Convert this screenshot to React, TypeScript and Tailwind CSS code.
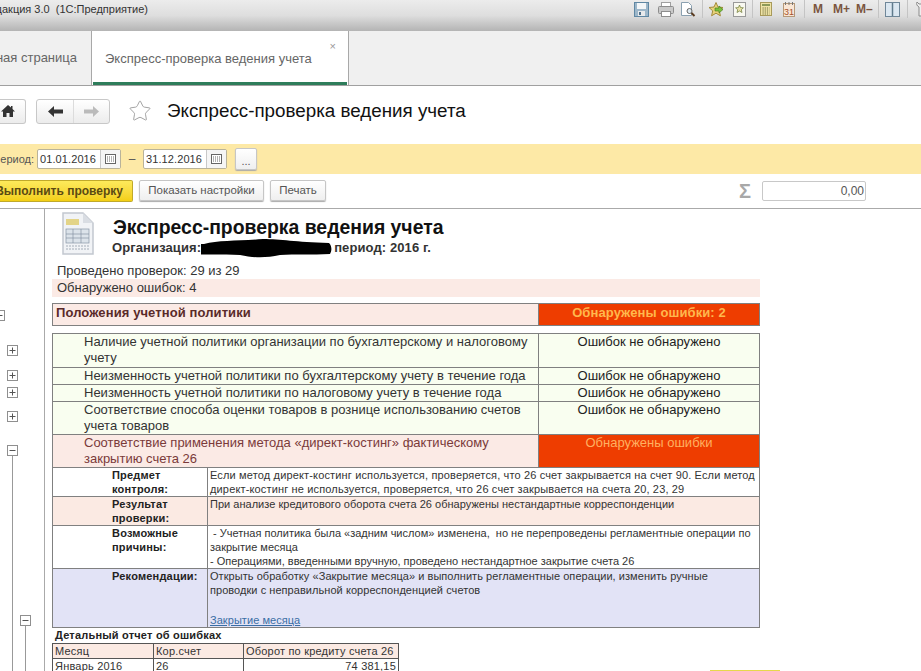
import { Star } from "lucide-react";

const FONT = "font-['Liberation_Sans',Arial,sans-serif]";

function TreeBox({ kind, className }: { kind: "plus" | "minus"; className: string }) {
  return (
    <svg className={`shrink-0 ${className}`} width="11" height="11" viewBox="0 0 11 11">
      <rect x="0.5" y="0.5" width="10" height="10" fill="#fff" stroke="#8f8f8f" />
      <path d={kind === "plus" ? "M2.5 5.5h6M5.5 2.5v6" : "M2.5 5.5h6"} stroke="#555" />
    </svg>
  );
}

function Divider({ className }: { className: string }) {
  return <div className={`h-[18px] w-px shrink-0 bg-[#c4c4c4] ${className}`} />;
}

function ToolIcons() {
  return (
    <div className="ml-[486px] flex h-[18px] shrink-0 items-center">
      {/* save */}
      <svg className="shrink-0" width="15" height="15" viewBox="0 0 15 15">
        <rect x="0.5" y="0.5" width="14" height="14" fill="#9db7ca" stroke="#5f87a3" />
        <rect x="3" y="1" width="9" height="6" fill="#f3f6f8" />
        <rect x="4" y="9" width="7" height="5" fill="#e8eaec" />
        <rect x="5" y="10" width="2" height="3" fill="#4d6f8a" />
      </svg>
      {/* print */}
      <svg className="ml-[9px] shrink-0" width="16" height="15" viewBox="0 0 16 15">
        <rect x="3.5" y="0.5" width="9" height="5" fill="#fff" stroke="#a0a0a0" />
        <rect x="0.5" y="4.5" width="15" height="7" rx="1" fill="#c9c9c9" stroke="#8d8d8d" />
        <rect x="3.5" y="9.5" width="9" height="5" fill="#fff" stroke="#8d8d8d" />
      </svg>
      {/* preview */}
      <svg className="ml-[6px] shrink-0" width="16" height="15" viewBox="0 0 16 15">
        <path d="M1.5.5h7l3 3v10h-10z" fill="#fff" stroke="#8aa0b0" />
        <circle cx="9.5" cy="9" r="2.5" fill="#dfeaf1" stroke="#666" />
        <path d="M11.5 11l3 3" stroke="#5a3b20" strokeWidth="2" />
      </svg>
      <Divider className="mx-[6px]" />
      {/* favourites with arrow */}
      <svg className="shrink-0" width="16" height="15" viewBox="0 0 16 15">
        <path d="M7 .5l2 4.5 5 .5-3.7 3.3 1.1 5L7 11.2l-4.4 2.6 1.1-5L0 5.5 5 5z" fill="#e7d27a" stroke="#a38b3a" />
        <path d="M6 6h4V4l4 3.5-4 3.5V9H6z" fill="#7cc03c" stroke="#3f7a18" strokeWidth="0.6" />
      </svg>
      {/* document with star */}
      <svg className="ml-[8px] shrink-0" width="13" height="15" viewBox="0 0 13 15">
        <rect x="0.5" y="0.5" width="12" height="14" fill="#f8f8f0" stroke="#999" />
        <path d="M6.5 3l1.1 2.6 2.8.2-2.1 1.9.7 2.8-2.5-1.5L4 10.5l.7-2.8-2.1-1.9 2.8-.2z" fill="#e9e2a8" stroke="#6b7a3a" strokeWidth="0.7" />
      </svg>
      <Divider className="mx-[6px]" />
      {/* calculator */}
      <svg className="ml-[1px] shrink-0" width="12" height="14" viewBox="0 0 12 14">
        <rect x="0.5" y="0.5" width="11" height="13" fill="#efe3a6" stroke="#a89a5a" />
        <rect x="2" y="2" width="8" height="2" fill="#8d9a5a" />
        <path d="M2.5 6h7M2.5 8h7M2.5 10h7M2.5 12h7" stroke="#6b6b3a" strokeDasharray="1.2 1" />
      </svg>
      {/* calendar */}
      <svg className="ml-[11px] shrink-0" width="12" height="15" viewBox="0 0 12 15">
        <rect x="0.5" y="1.5" width="11" height="13" fill="#f9e6d5" stroke="#b59878" />
        <path d="M2.5 0v3M6 0v3M9.5 0v3" stroke="#777" />
        <text x="6" y="12.5" textAnchor="middle" fontSize="9" fill="#a4502c" fontFamily="Liberation Sans">31</text>
      </svg>
      <Divider className="mr-[8px] ml-[9px]" />
      <div className="flex shrink-0 items-center text-[12px] leading-none font-bold whitespace-nowrap text-[#7b5540]">
        <span className="w-[10px]">M</span>
        <span className="ml-[10px] w-[16px]">M+</span>
        <span className="ml-[7px] w-[16px]">M–</span>
      </div>
      <Divider className="mr-[6px] ml-[6px]" />
      <svg className="shrink-0" width="15" height="15" viewBox="0 0 15 15">
        <rect x="0.5" y="0.5" width="14" height="14" fill="#dbe7f1" stroke="#6f8799" />
        <path d="M7.5 1v13" stroke="#5f7a8c" strokeWidth="1.5" />
      </svg>
      <Divider className="mr-[7px] ml-[7px]" />
      <svg className="shrink-0" width="12" height="17" viewBox="0 0 12 17">
        <path d="M2 1c-1 2 0 4 2 5v9h3V6c2-1 3-3 2-5L7 3H4z" fill="#eee" stroke="#8b8b8b" />
      </svg>
    </div>
  );
}

function DateField({ value }: { value: string }) {
  return (
    <div className="flex h-[20px] w-[84px] items-center rounded-[2px] border border-[#b9b39a] bg-white">
      <span className="w-[62px] pl-[2px] text-[11px] tracking-[0.1px] text-[#333]">{value}</span>
      <span className="flex h-full flex-1 items-center justify-center border-l border-[#c8c8c8] bg-[#f5f5f5]">
        <svg width="11" height="10" viewBox="0 0 11 10">
          <rect x="0.5" y="0.5" width="10" height="9" fill="#fff" stroke="#666" />
          <path d="M2 3h7M2 5h7M2 7h7" stroke="#666" strokeDasharray="1 1" />
        </svg>
      </span>
    </div>
  );
}

function FlatButton({ label, width }: { label: string; width: string }) {
  return (
    <div className={`flex h-[21px] items-center justify-center rounded-[2px] border border-[#c6c6c6] bg-gradient-to-b from-white to-[#efefef] text-[11.5px] text-[#555] shadow-[0_1px_1px_#aaa] ${width}`}>
      {label}
    </div>
  );
}

const CHECKS = [
  { lines: "Наличие учетной политики организации по бухгалтерскому и налоговому учету", height: "h-[34px]" },
  { lines: "Неизменность учетной политики по бухгалтерскому учету в течение года", height: "h-[16px]" },
  { lines: "Неизменность учетной политики по налоговому учету в течение года", height: "h-[17px]" },
  { lines: "Соответствие способа оценки товаров в рознице использованию счетов учета товаров", height: "h-[33px]" },
];

const DETAILS = [
  {
    label: ["Предмет", "контроля:"],
    bg: "bg-white",
    height: "h-[29px]",
    tracking: "tracking-[0.15px]",
    text: (
      <>
        Если метод директ-костинг используется, проверяется, что 26 счет закрывается на счет 90. Если метод
        <br />
        директ-костинг не используется, проверяется, что 26 счет закрывается на счета 20, 23, 29
      </>
    ),
  },
  {
    label: ["Результат", "проверки:"],
    bg: "bg-[#fbeae3]",
    height: "h-[29px]",
    tracking: "tracking-[0.02px]",
    text: <>При анализе кредитового оборота счета 26 обнаружены нестандартные корреспонденции</>,
  },
  {
    label: ["Возможные", "причины:"],
    bg: "bg-white",
    height: "h-[43px]",
    tracking: "tracking-normal",
    text: (
      <>
        &nbsp;- Учетная политика была «задним числом» изменена, &nbsp;но не перепроведены регламентные операции по
        <br />
        закрытие месяца
        <br />- Операциями, введенными вручную, проведено нестандартное закрытие счета 26
      </>
    ),
  },
];

const LABEL_CELL = "border border-[#808080] pl-[59px] align-top text-[11px] leading-[14px] font-bold tracking-[0.2px] text-[#222]";
const TEXT_CELL = "border border-[#808080] pl-[2px] align-top text-[11px] leading-[14px] whitespace-nowrap text-[#333]";

function TextSlice({ children, width }: { children: React.ReactNode; width: string }) {
  return <div className={`flex shrink-0 justify-end overflow-hidden whitespace-nowrap ${width}`}>{children}</div>;
}

export default function App() {
  return (
    <div className={`${FONT} flex h-[671px] w-[921px] flex-col overflow-hidden bg-white`}>
      {/* title bar */}
      <div className="flex h-[31px] shrink-0 bg-gradient-to-b from-[#ececec] via-[#dedede] to-[#b4b4b4]">
        <TextSlice width="w-[148px]">
          <span className="pt-[2px] text-[11px] leading-[14px] text-[#333]">Бухгалтерия предприятия, редакция 3.0 &nbsp;(1С:Предприятие)</span>
        </TextSlice>
        <ToolIcons />
      </div>

      {/* tabs */}
      <div className="flex h-[55px] shrink-0 border-b border-[#a0a0a0] bg-[#f0f0f0]">
        <div className="flex w-[91px] shrink-0 items-center justify-end overflow-hidden pr-[14px] pb-[1px] text-[13px] whitespace-nowrap text-[#666]">
          Начальная страница
        </div>
        <div className="relative flex w-[258px] shrink-0 flex-col border-x border-[#a8a8a8] bg-white">
          <div className="flex-1 pt-[19px] pl-[13px] text-[13px] leading-[18px] text-[#666]">Экспресс-проверка ведения учета</div>
          <span className="absolute top-[10px] right-[12px] text-[11px] leading-none text-[#999]">×</span>
          <div className="mx-[1px] h-[3px] bg-[#2e7d5b]" />
        </div>
      </div>

      {/* nav */}
      <div className="flex h-[58px] shrink-0 items-center pb-[8px]">
        <div className="flex h-[25px] w-[26px] items-center justify-end rounded-r-[3px] border border-l-0 border-[#c8c8c8] bg-gradient-to-b from-white to-[#ececec] pr-[10px]">
          <svg className="shrink-0" width="14" height="12" viewBox="0 0 14 12">
            <path d="M7 0L0 6.5h2V12h3.5V8h3v4H12V6.5h2L11.5 4V1H10v1.5z" fill="#333" />
          </svg>
        </div>
        <div className="ml-[10px] flex h-[25px] w-[74px] rounded-[3px] border border-[#c8c8c8] bg-gradient-to-b from-white to-[#ececec]">
          <span className="flex w-[37px] items-center justify-center border-r border-[#dcdcdc]">
            <svg width="15" height="11" viewBox="0 0 15 11"><path d="M0 5.5L6 0v3.5h9v4H6V11z" fill="#333" /></svg>
          </span>
          <span className="flex flex-1 items-center justify-center">
            <svg width="15" height="11" viewBox="0 0 15 11"><path d="M15 5.5L9 0v3.5H0v4h9V11z" fill="#bbb" /></svg>
          </span>
        </div>
        <Star className="ml-[18px] shrink-0" size={24} strokeWidth={0.9} color="#999" />
        <h1 className="ml-[15px] text-[18.8px] leading-none text-[#111]">Экспресс-проверка ведения учета</h1>
      </div>

      {/* period */}
      <div className="flex h-[30px] shrink-0 items-center bg-[#fde9a6]">
        <TextSlice width="w-[34px]">
          <span className="text-[11px] text-[#555]">Период:</span>
        </TextSlice>
        <div className="ml-[3px]"><DateField value="01.01.2016" /></div>
        <span className="w-[22px] text-center text-[12px] text-[#555]">–</span>
        <DateField value="31.12.2016" />
        <div className="ml-[8px] flex h-[22px] w-[22px] items-end justify-center rounded-[2px] border border-[#c6c6c6] bg-gradient-to-b from-white to-[#efefef] pb-[2px] text-[11px] leading-[12px] text-[#555] shadow-[0_1px_1px_#aaa]">...</div>
      </div>

      {/* actions */}
      <div className="flex h-[35px] shrink-0 items-center border-b border-[#aaa] pb-[1px]">
        <div className="flex h-[22px] w-[133px] items-center justify-end overflow-hidden rounded-r-[2px] border border-l-0 border-[#c0a92a] bg-gradient-to-b from-[#fdea5a] to-[#f3cf12] pr-[9px] text-[12px] font-bold whitespace-nowrap text-[#5b4a12]">
          Выполнить проверку
        </div>
        <div className="ml-[6px]"><FlatButton label="Показать настройки" width="w-[125px]" /></div>
        <div className="ml-[6px]"><FlatButton label="Печать" width="w-[56px]" /></div>
        <span className="ml-[413px] text-[20px] leading-none font-bold text-[#a8a8a8]">Σ</span>
        <div className="ml-[11px] flex h-[20px] w-[104px] items-center justify-end rounded-[2px] border border-[#c8c8c8] pr-[1px] text-[12px] text-[#555]">0,00</div>
      </div>

      {/* body */}
      <div className="flex min-h-0 flex-1">
        <aside className="flex w-[45px] shrink-0 flex-col border-r border-[#aaa]">
          <TreeBox kind="minus" className="ml-[-6px] mt-[101px]" />
          <TreeBox kind="plus" className="ml-[7px] mt-[24px]" />
          <TreeBox kind="plus" className="ml-[7px] mt-[14px]" />
          <TreeBox kind="plus" className="ml-[7px] mt-[6px]" />
          <TreeBox kind="plus" className="ml-[7px] mt-[13px]" />
          <TreeBox kind="minus" className="ml-[7px] mt-[23px]" />
          <div className="flex flex-1">
            <div className="ml-[12px] w-px bg-[#999]" />
            <div className="ml-[7px] flex flex-col">
              <TreeBox kind="minus" className="mt-[159px]" />
              <div className="ml-[5px] w-px flex-1 bg-[#999]" />
            </div>
          </div>
        </aside>

        <main className="flex min-w-0 flex-1 flex-col pl-[7px] text-[13px] text-[#333]">
          <div className="flex h-[53px] shrink-0">
            <svg className="mt-[3px] ml-[9px] shrink-0" width="34" height="44" viewBox="0 0 34 44">
              <path d="M2 1h20l10 10v31H2z" fill="#f1f3f6" stroke="#c2c7cf" strokeWidth="1.5" />
              <path d="M22 1v10h10z" fill="#d9dde3" />
              <rect x="5" y="7" width="13" height="6" fill="#e3d488" />
              <rect x="5" y="17" width="23" height="14" fill="#dce3ea" stroke="#8794a5" strokeWidth="0.7" />
              <path d="M5 22h23M5 26h23M12 17v14M20 17v14" stroke="#8794a5" strokeWidth="0.7" />
              <path d="M5 34h23M5 37h23" stroke="#a4adb8" strokeDasharray="2 1" />
            </svg>
            <div className="ml-[17px] flex flex-col">
              <div className="pt-[7px] pl-[1px] text-[19.4px] leading-[22px] font-bold whitespace-nowrap text-[#111]">Экспресс-проверка ведения учета</div>
              <div className="flex items-center text-[13px] leading-[16px] font-bold tracking-[0.1px] whitespace-nowrap text-[#333]">
                Организация:
                <svg className="shrink-0" width="131" height="20" viewBox="0 0 131 20">
                  <path d="M3 6C18 2 38 3 62 1c18 0 32 3 66 4 3 3 3 8 1 11-18 1-35 0-50 1-14 3-26 3-40 0-18-1-36 0-55-1-4-3-4-7-1-10z" fill="#000" />
                </svg>
                <span className="ml-[2px]">период: 2016 г.</span>
              </div>
            </div>
          </div>

          <div className="pl-[5px] leading-[17px]">Проведено проверок: 29 из 29</div>
          <div className="w-[708px] bg-[#fbeae5] pl-[5px] leading-[18px]">Обнаружено ошибок: 4</div>

          <table className="mt-[6px] w-[708px] table-fixed border-collapse">
            <tbody>
              <tr className="h-[22px]">
                <td className="w-[486px] border border-[#808080] bg-[#fbeae5] pt-px pl-[3px] align-top text-[13px] leading-[16px] font-bold tracking-[0.1px] text-[#5a2a2a]">Положения учетной политики</td>
                <td className="border border-[#808080] bg-[#ee3d00] pt-px text-center align-top text-[13px] leading-[16px] font-bold tracking-[0.1px] text-[#ffb84d]">Обнаружены ошибки: 2</td>
              </tr>
            </tbody>
          </table>

          <table className="mt-[7px] w-[708px] table-fixed border-collapse">
            <colgroup>
              <col className="w-[155px]" />
              <col className="w-[331px]" />
              <col />
            </colgroup>
            <tbody>
              {CHECKS.map((check) => (
                <tr key={check.lines} className={`${check.height} bg-[#f9fef0]`}>
                  <td colSpan={2} className="border border-[#808080] pr-[4px] pl-[31px] align-top text-[13px] leading-[16px] text-[#333]">{check.lines}</td>
                  <td className="border border-[#808080] text-center align-top text-[13px] leading-[16px] text-[#222]">Ошибок не обнаружено</td>
                </tr>
              ))}
              <tr className="h-[33px] bg-[#fbeae5]">
                <td colSpan={2} className="border border-[#808080] pr-[4px] pl-[31px] align-top text-[13px] leading-[16px] text-[#7a3a3a]">
                  Соответствие применения метода «директ-костинг» фактическому закрытию счета 26
                </td>
                <td className="border border-[#808080] bg-[#ee3d00] text-center align-top text-[13px] leading-[16px] text-[#ffb060]">Обнаружены ошибки</td>
              </tr>
              {DETAILS.map((row) => (
                <tr key={row.label[0]} className={`${row.height} ${row.bg}`}>
                  <td className={LABEL_CELL}>
                    {row.label[0]}
                    <br />
                    {row.label[1]}
                  </td>
                  <td colSpan={2} className={`${TEXT_CELL} ${row.tracking}`}>{row.text}</td>
                </tr>
              ))}
              <tr className="h-[59px] bg-[#e2e3f6]">
                <td className={LABEL_CELL}>Рекомендации:</td>
                <td colSpan={2} className={`${TEXT_CELL} tracking-[0.05px]`}>
                  <div className="h-[44px]">
                    Открыть обработку «Закрытие месяца» и выполнить регламентные операции, изменить ручные
                    <br />
                    проводки с неправильной корреспонденцией счетов
                  </div>
                  <a className="text-[#3a6ea5] underline">Закрытие месяца</a>
                </td>
              </tr>
            </tbody>
          </table>

          <div className="pl-[3px] text-[11px] leading-[15px] font-bold tracking-[0.2px] text-[#222]">Детальный отчет об ошибках</div>
          <div className="flex">
            <table className="h-fit w-[347px] table-fixed border-collapse text-[11px] leading-[14px] tracking-[0.2px]">
              <colgroup>
                <col className="w-[101px]" />
                <col className="w-[90px]" />
                <col />
              </colgroup>
              <tbody>
                <tr className="h-[15px] bg-[#fbeae3]">
                  <td className="border border-[#555] pl-[2px]">Месяц</td>
                  <td className="border border-[#555] pl-[2px]">Кор.счет</td>
                  <td className="border border-[#555] pl-[2px]">Оборот по кредиту счета 26</td>
                </tr>
                <tr className="h-[15px]">
                  <td className="border border-[#555] pl-[2px]">Январь 2016</td>
                  <td className="border border-[#555] pl-[2px]">26</td>
                  <td className="border border-[#555] pr-[2px] text-right">74 381,15</td>
                </tr>
              </tbody>
            </table>
            <div className="mt-[27px] ml-[311px] h-[10px] w-[70px] shrink-0 border-2 border-[#e6d84a] bg-[#fdfbe0]" />
          </div>
        </main>
      </div>
    </div>
  );
}
